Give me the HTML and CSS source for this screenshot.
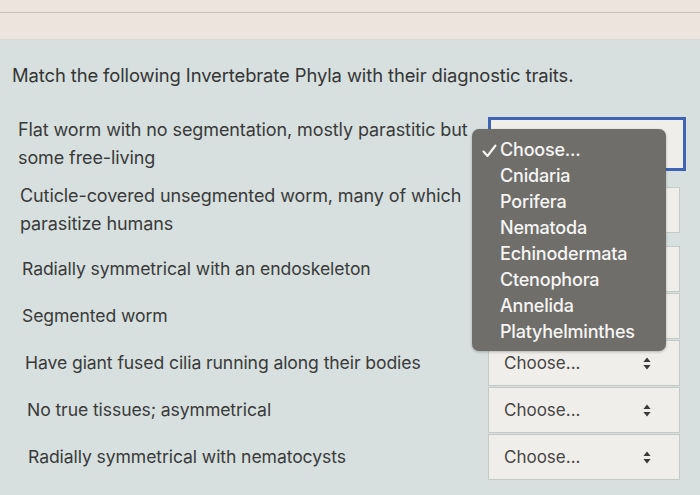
FILE: index.html
```html
<!DOCTYPE html>
<html>
<head>
<meta charset="utf-8">
<link rel="stylesheet" href="styles.css">
</head>
<body>
<div class="topband"><div class="topline"></div></div>
<div class="panel">
  <h1 class="title">Match the following Invertebrate Phyla with their diagnostic traits.</h1>
  <div class="rows">
    <div class="row tall first">
      <div class="label">Flat worm with no segmentation, mostly parastitic but some free-living</div>
      <div class="select focused"></div>
    </div>
    <div class="row tall second">
      <div class="label">Cuticle-covered unsegmented worm, many of which parasitize humans</div>
      <div class="select"></div>
    </div>
    <div class="row small">
      <div class="label">Radially symmetrical with an endoskeleton</div>
      <div class="select"></div>
    </div>
    <div class="row small">
      <div class="label">Segmented worm</div>
      <div class="select"></div>
    </div>
    <div class="row small r5">
      <div class="label">Have giant fused cilia running along their bodies</div>
      <div class="select"><span class="sel-text">Choose...</span><svg class="arrows" width="8" height="13" viewBox="0 0 8 13"><path d="M4 0.5 L7.6 5 H0.4 Z M4 12.5 L7.6 8 H0.4 Z" fill="#3a3a3a"/></svg></div>
    </div>
    <div class="row small r6">
      <div class="label">No true tissues; asymmetrical</div>
      <div class="select"><span class="sel-text">Choose...</span><svg class="arrows" width="8" height="13" viewBox="0 0 8 13"><path d="M4 0.5 L7.6 5 H0.4 Z M4 12.5 L7.6 8 H0.4 Z" fill="#3a3a3a"/></svg></div>
    </div>
    <div class="row small r7">
      <div class="label">Radially symmetrical with nematocysts</div>
      <div class="select"><span class="sel-text">Choose...</span><svg class="arrows" width="8" height="13" viewBox="0 0 8 13"><path d="M4 0.5 L7.6 5 H0.4 Z M4 12.5 L7.6 8 H0.4 Z" fill="#3a3a3a"/></svg></div>
    </div>
  </div>
  <ul class="menu">
    <li class="opt checked"><svg class="check" width="15" height="14" viewBox="0 0 15 14"><path d="M1.5 7.5 L5.5 12 L13.5 1.5" fill="none" stroke="#f5f5f3" stroke-width="2.1" stroke-linecap="round" stroke-linejoin="round"/></svg>Choose...</li>
    <li class="opt">Cnidaria</li>
    <li class="opt">Porifera</li>
    <li class="opt">Nematoda</li>
    <li class="opt">Echinodermata</li>
    <li class="opt">Ctenophora</li>
    <li class="opt">Annelida</li>
    <li class="opt">Platyhelminthes</li>
  </ul>
</div>
</body>
</html>
```

FILE: styles.css
```css
html, body {
  margin: 0;
  padding: 0;
  width: 700px;
  height: 495px;
  overflow: hidden;
  background: #d7e0de;
  font-family: Inter, "Noto Sans", sans-serif;
  color: #3a3a3a;
}
.topband {
  height: 40px;
  background: #ede4de;
  padding-top: 12px;
  box-sizing: border-box;
  border-bottom: 1px solid #dcd6d1;
}
.topline {
  height: 1px;
  background: #c9c2bc;
}
.panel {
  position: relative;
  height: 455px;
  background: #d7e0de;
  padding: 0 14px 0 12px;
  box-sizing: border-box;
}
.title {
  margin: 0;
  padding-top: 23px;
  font-size: 18.4px;
  font-weight: 400;
  line-height: 24px;
  letter-spacing: -0.1px;
  color: #353535;
}
.rows {
  margin-top: 29px;
  display: flex;
  flex-direction: column;
  gap: 1px;
}
.row {
  display: flex;
  align-items: center;
  justify-content: space-between;
  min-height: 46px;
  padding-left: 10px;
}
.row.tall { min-height: 56px; }
.row.first { margin-bottom: 9px; padding-left: 6px; }
.row.second { margin-bottom: 7px; padding-left: 8px; }
.row.r5 { padding-left: 13px; }
.row.r6 { padding-left: 15px; }
.row.r7 { padding-left: 16px; }
.label {
  font-size: 18px;
  line-height: 28px;
  width: 462px;
  letter-spacing: -0.1px;
}
.row.small .label {
  font-size: 17.6px;
  width: 450px;
}
.select {
  width: 192px;
  height: 46px;
  box-sizing: border-box;
  background: #f0eeea;
  border: 1px solid #c5cac7;
  display: flex;
  align-items: center;
  justify-content: space-between;
  padding: 0 28px 0 15px;
  margin-right: 6px;
  flex-shrink: 0;
}
.select.focused {
  width: 198px;
  height: 54px;
  border: 3px solid #3e62b4;
  margin-right: 0;
}
.sel-text {
  font-size: 17px;
  color: #454545;
}
.arrows { display: block; }
.menu {
  position: absolute;
  left: 472px;
  top: 89px;
  width: 194px;
  height: 222px;
  margin: 0;
  padding: 8px 0 0 0;
  box-sizing: border-box;
  list-style: none;
  background: #6f6e6b;
  border-radius: 7px;
  box-shadow: 0 1px 3px rgba(0,0,0,0.25);
}
.opt {
  height: 26px;
  line-height: 26px;
  padding-left: 28px;
  font-size: 18px;
  font-weight: 500;
  color: #f5f5f3;
  position: relative;
  letter-spacing: -0.2px;
}
.check {
  position: absolute;
  left: 10px;
  top: 7px;
}
```
